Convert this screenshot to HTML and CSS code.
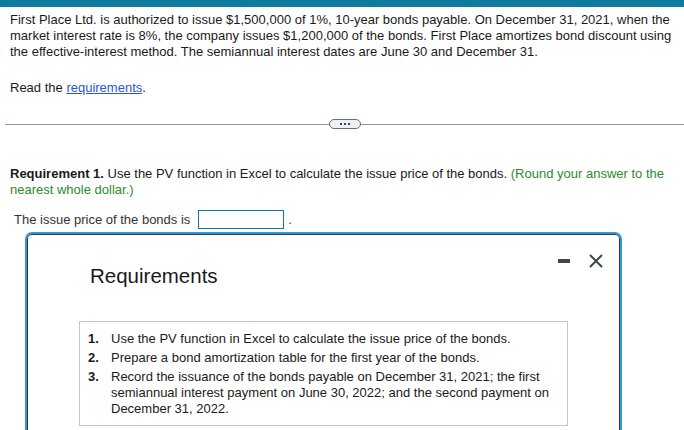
FILE: index.html
```html
<!DOCTYPE html>
<html>
<head>
<meta charset="utf-8">
<link rel="stylesheet" href="styles.css">
</head>
<body>
<div class="topbar"></div>
<div class="intro">
  <p>First Place Ltd. is authorized to issue $1,500,000 of 1%, 10-year bonds payable. On December 31, 2021, when the market interest rate is 8%, the company issues $1,200,000 of the bonds. First Place amortizes bond discount using the effective-interest method. The semiannual interest dates are June 30 and December 31.</p>
  <p class="read">Read the <a href="#">requirements</a>.</p>
</div>
<div class="divider">
  <span class="line"></span>
  <span class="pill"><i></i><i></i><i></i></span>
  <span class="line"></span>
</div>
<div class="req">
  <p><b>Requirement 1.</b> Use the PV function in Excel to calculate the issue price of the bonds. <span class="green">(Round your answer to the nearest whole dollar.)</span></p>
  <div class="answer">The issue price of the bonds is <span class="input"></span> .</div>
</div>
<div class="modal">
  <div class="controls">
    <span class="minus"></span>
    <svg class="close" width="16" height="16" viewBox="0 0 16 16"><path d="M2 2 L14 14 M14 2 L2 14" stroke="#3c4650" stroke-width="2" fill="none"/></svg>
  </div>
  <h2>Requirements</h2>
  <ol class="list">
    <li><span class="num">1.</span><span>Use the PV function in Excel to calculate the issue price of the bonds.</span></li>
    <li><span class="num">2.</span><span>Prepare a bond amortization table for the first year of the bonds.</span></li>
    <li><span class="num">3.</span><span>Record the issuance of the bonds payable on December 31, 2021; the first semiannual interest payment on June 30, 2022; and the second payment on December 31, 2022.</span></li>
  </ol>
</div>
</body>
</html>
```

FILE: styles.css
```css
html, body {
  margin: 0;
  padding: 0;
  background: #fff;
  overflow: hidden;
  height: 430px;
}
body {
  font-family: "Liberation Sans", Arial, sans-serif;
  font-size: 13px;
  color: #1a1a1a;
}
.topbar {
  height: 7px;
  background: #0e7a9c;
}
.intro {
  padding: 5px 10px 0 10px;
}
.intro p {
  margin: 0;
  line-height: 16px;
}
.intro .read {
  margin-top: 20px;
}
.intro a {
  color: #2a55d9;
  text-decoration: underline;
}
.divider {
  display: flex;
  align-items: center;
  margin: 23px 0 0 5px;
  height: 10px;
}
.divider .line {
  flex: 1;
  height: 1px;
  background: #8b95a3;
}
.divider .pill {
  width: 30px;
  height: 8px;
  border: 1px solid #66707c;
  border-radius: 5px;
  background: #eef1f4;
  display: flex;
  align-items: center;
  justify-content: center;
  gap: 2px;
}
.divider .pill i {
  width: 2px;
  height: 2px;
  background: #3b4552;
  display: block;
}
.req {
  padding: 0 10px;
  margin-top: 37px;
}
.req p {
  margin: 0;
  line-height: 16px;
}
.req b {
  font-weight: bold;
}
.green {
  color: #2d8a2d;
}
.answer {
  display: flex;
  align-items: center;
  margin-top: 12px;
  padding-left: 4px;
  color: #333;
}
.input {
  display: inline-block;
  width: 84px;
  height: 17px;
  border: 1px solid #0e7a9c;
  margin: 0 4px 0 8px;
}
.modal {
  position: relative;
  margin: 3px 0 0 25px;
  width: 593px;
  height: 220px;
  border: 2px solid #2b9be0;
  border-radius: 7px;
  box-shadow: inset 0 0 0 1px #333;
  background: #fff;
}
.controls {
  position: absolute;
  right: 16px;
  top: 19px;
  display: flex;
  align-items: center;
  gap: 18px;
}
.minus {
  width: 12px;
  height: 4px;
  background: #454545;
  display: block;
}
.close {
  display: block;
}
.modal h2 {
  margin: 0;
  font-weight: normal;
  font-size: 20.5px;
  color: #1a1a1a;
  padding: 31px 0 0 63px;
  line-height: 22px;
}
.list {
  list-style: none;
  margin: 34px 0 0 52px;
  width: 471px;
  padding: 9px 8px 8px 8px;
  border: 1px solid #c4c4c4;
}
.list li {
  display: flex;
  line-height: 16px;
  margin-bottom: 3px;
}
.list li:last-child {
  margin-bottom: 0;
}
.list .num {
  width: 23px;
  flex: none;
  font-weight: bold;
}
```
